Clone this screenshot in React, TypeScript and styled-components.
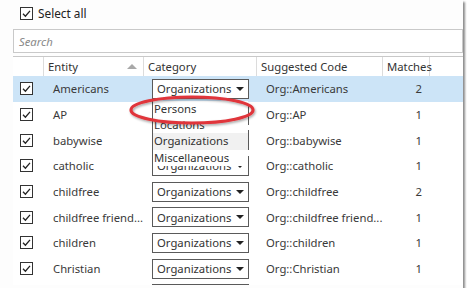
import { FC } from "react"
import styled, { createGlobalStyle } from "styled-components"

const GlobalStyle = createGlobalStyle`
  body {
    margin: 0;
    background: #ffffff;
    font-family: "Noto Sans", "Open Sans", sans-serif;
  }
`

const Panel = styled.div`
  position: relative;
  width: 463px;
  height: 288px;
  padding-bottom: 3px;
  box-sizing: border-box;
  background: #fdfdfd;
  box-shadow: 2px 2px 2px rgba(0, 0, 0, 0.45);
  display: flex;
  flex-direction: column;
  overflow: hidden;
`

const TopBar = styled.label`
  display: flex;
  align-items: center;
  gap: 5px;
  height: 26px;
  padding-left: 20px;
  font-size: 11.8px;
  color: #222;
`

const SearchBox = styled.div`
  margin: 3px 0 0 13px;
  height: 22px;
  border: 1px solid #c9c9c9;
  background: #fff;
  display: flex;
  align-items: center;
  padding-left: 5px;
  font-size: 11.3px;
  font-style: italic;
  color: #888;
`

const Table = styled.div`
  margin: 3px 0 0 13px;
  flex: 1;
  overflow: hidden;
  position: relative;
  background: #fff;
`

const cols = "31px 100px 113px 126px 47px 1fr"

const HeaderRow = styled.div`
  display: grid;
  grid-template-columns: ${cols};
  height: 19px;
  border-top: 1px solid #c8c8c8;
  font-size: 11.3px;
  color: #333;
`

const HeadCell = styled.div<{ $last?: boolean }>`
  display: flex;
  align-items: center;
  justify-content: space-between;
  padding: 0 6px 0 4px;
  border-right: ${(p) => (p.$last ? "none" : "1px solid #dcdcdc")};
`

const SortArrow = styled.span`
  width: 0;
  height: 0;
  border-left: 5px solid transparent;
  border-right: 5px solid transparent;
  border-bottom: 5px solid #a8a8a8;
`

const Row = styled.div<{ $selected?: boolean }>`
  display: grid;
  grid-template-columns: ${cols};
  height: 25.7px;
  align-items: center;
  background: ${(p) => (p.$selected ? "#cce4f7" : "transparent")};
  font-size: 11.3px;
  color: #3a3a3a;
`

const CheckCell = styled.div`
  display: flex;
  justify-content: center;
  padding-right: 4px;
`

const TextCell = styled.div<{ $align?: string }>`
  padding: 0 8px 0 9px;
  white-space: nowrap;
  text-align: ${(p) => p.$align || "left"};
`

const CatCell = styled.div`
  position: relative;
  padding-left: 8px;
`

const Select = styled.div`
  width: 97px;
  height: 20px;
  box-sizing: border-box;
  border: 1px solid #5a5a5a;
  background: #fff;
  display: flex;
  align-items: center;
  justify-content: space-between;
  padding: 0 4px 0 4px;
  font-size: 11.3px;
  color: #333;
`

const DownArrow = styled.span`
  width: 0;
  height: 0;
  border-left: 4px solid transparent;
  border-right: 4px solid transparent;
  border-top: 4px solid #222;
`

const Popup = styled.div`
  position: absolute;
  top: 22px;
  left: 8px;
  width: 95px;
  background: #fff;
  border-left: 1px solid #5a5a5a;
  z-index: 2;
  font-size: 11.3px;
  color: #333;
`

const PopupItem = styled.div<{ $hover?: boolean }>`
  height: 16.3px;
  line-height: 16.3px;
  padding-left: 1px;
  background: ${(p) => (p.$hover ? "#f1f1f1" : "#fff")};
`

const BoxSvg = styled.svg`
  display: block;
  flex: none;
`

const Ring = styled.svg`
  position: absolute;
  left: 128px;
  top: 94px;
  z-index: 3;
  overflow: visible;
`

const Check: FC = () => (
  <BoxSvg width="13" height="13" viewBox="0 0 13 13">
    <rect x="0.5" y="0.5" width="12" height="12" fill="#fff" stroke="#333" />
    <path d="M3 6.8 L5.4 9.2 L10 3.8" fill="none" stroke="#222" strokeWidth="1.3" />
  </BoxSvg>
)

const rows = [
  { entity: "Americans", code: "Org::Americans", matches: 2 },
  { entity: "AP", code: "Org::AP", matches: 1 },
  { entity: "babywise", code: "Org::babywise", matches: 1 },
  { entity: "catholic", code: "Org::catholic", matches: 1 },
  { entity: "childfree", code: "Org::childfree", matches: 2 },
  { entity: "childfree friend...", code: "Org::childfree friend...", matches: 1 },
  { entity: "children", code: "Org::children", matches: 1 },
  { entity: "Christian", code: "Org::Christian", matches: 1 },
  { entity: "", code: "", matches: 0 },
]

const App: FC = () => {
  return (
    <>
      <GlobalStyle />
      <Panel>
        <TopBar>
          <Check />
          <span>Select all</span>
        </TopBar>
        <SearchBox>Search</SearchBox>
        <Table>
          <HeaderRow>
            <HeadCell />
            <HeadCell>
              <span>Entity</span>
              <SortArrow />
            </HeadCell>
            <HeadCell>Category</HeadCell>
            <HeadCell>Suggested Code</HeadCell>
            <HeadCell>Matches</HeadCell>
            <HeadCell $last />
          </HeaderRow>
          {rows.map((r, i) => (
            <Row key={i} $selected={i === 0}>
              <CheckCell>{r.entity && <Check />}</CheckCell>
              <TextCell>{r.entity}</TextCell>
              <CatCell>
                <Select>
                  <span>{r.entity && "Organizations"}</span>
                  <DownArrow />
                </Select>
                {i === 0 && (
                  <Popup>
                    <PopupItem>Persons</PopupItem>
                    <PopupItem>Locations</PopupItem>
                    <PopupItem $hover>Organizations</PopupItem>
                    <PopupItem>Miscellaneous</PopupItem>
                  </Popup>
                )}
              </CatCell>
              <TextCell>{r.code}</TextCell>
              <TextCell $align="right">{r.matches || ""}</TextCell>
              <div />
            </Row>
          ))}
        </Table>
        <Ring width="128" height="32" viewBox="0 0 128 32">
          <defs>
            <filter id="sh" x="-10%" y="-30%" width="120%" height="160%">
              <feDropShadow dx="1" dy="1.5" stdDeviation="1" floodColor="#000" floodOpacity="0.35" />
            </filter>
          </defs>
          <ellipse cx="64" cy="16" rx="61" ry="13" fill="none" stroke="#e0353b" strokeWidth="3.2" filter="url(#sh)" />
        </Ring>
      </Panel>
    </>
  )
}

export default App
